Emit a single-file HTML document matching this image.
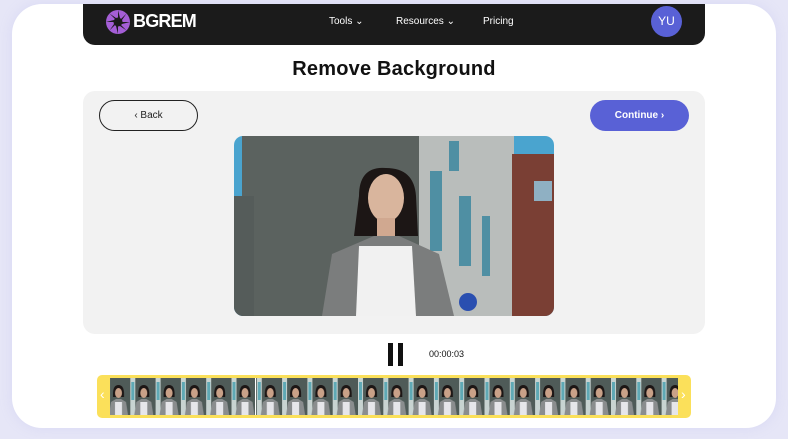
<!DOCTYPE html>
<html><head><meta charset="utf-8">
<style>
*{margin:0;padding:0;box-sizing:border-box}
body{width:788px;height:439px;overflow:hidden;background:#e6e6f7;font-family:"Liberation Sans",sans-serif;position:relative}
.card{position:absolute;left:12px;top:4px;width:764px;height:424px;background:#fff;border-radius:30px;box-shadow:0 0 14px #d8d8f3}
.nav{position:absolute;left:83px;top:4px;width:622px;height:41px;background:#1b1b1b;border-radius:0 0 12px 12px;color:#fff}
.nav .logo{position:absolute;left:22px;top:5px;width:26px;height:26px}
.nav .brand{position:absolute;left:50px;top:7px;font-weight:bold;font-size:18px;letter-spacing:-0.8px}
.nav .m{position:absolute;top:12px;font-size:10px}
.av{position:absolute;left:568px;top:2px;width:31px;height:31px;border-radius:50%;background:#5961d6;color:#fff;font-size:12px;text-align:center;line-height:31px}
h1{position:absolute;left:0;width:788px;top:58px;text-align:center;font-size:20px;font-weight:900;color:#111;letter-spacing:0.2px}
.panel{position:absolute;left:83px;top:91px;width:622px;height:243px;background:#f2f2f2;border-radius:12px}
.back{position:absolute;left:99px;top:100px;width:99px;height:31px;border:1px solid #222;border-radius:16px;font-size:10px;text-align:center;line-height:29px;color:#222}
.cont{position:absolute;left:590px;top:100px;width:99px;height:31px;background:#5961d6;border-radius:16px;font-size:10px;font-weight:bold;color:#fff;text-align:center;line-height:31px}
.photo{position:absolute;left:234px;top:136px;width:320px;height:180px;border-radius:9px;overflow:hidden}
.pause{position:absolute;top:343px;width:5px;height:23px;background:#111}
.time{position:absolute;left:429px;top:349px;font-size:9px;color:#111}
.strip{position:absolute;left:97px;top:375px;width:594px;height:43px;background:#fbe05a;border-radius:5px}
.frames{position:absolute;left:110px;top:378px;width:568px;height:37px;overflow:hidden}
</style></head><body>
<div class="card"></div>
<div class="nav">
<svg class="logo" viewBox="0 0 26 26"><g fill="#a45ed6"><circle cx="13" cy="13" r="12"/></g><g fill="#1b1b1b"><circle cx="13" cy="13" r="4.5"/><path d="M13 1 L15 9 L13 13Z M25 13 L17 15 L13 13Z M13 25 L11 17 L13 13Z M1 13 L9 11 L13 13Z M4.5 4.5 L11 9 L13 13Z M21.5 21.5 L15 17 L13 13Z M21.5 4.5 L17 11 L13 13Z M4.5 21.5 L9 15 L13 13Z"/></g></svg>
<div class="brand">BGREM</div>
<div class="m" style="left:246px">Tools ⌄</div>
<div class="m" style="left:313px">Resources ⌄</div>
<div class="m" style="left:400px">Pricing</div>
<div class="av">YU</div>
</div>
<h1>Remove Background</h1>
<div class="panel"></div>
<div class="back">‹ Back</div>
<div class="cont">Continue ›</div>
<div class="photo">
<svg width="320" height="180" viewBox="0 0 320 180">
<rect width="320" height="180" fill="#4aa4cf"/>
<rect x="8" y="0" width="182" height="180" fill="#5b625f"/>
<rect x="0" y="60" width="20" height="120" fill="#555c5a"/>
<rect x="185" y="0" width="95" height="180" fill="#b9bdbb"/>
<rect x="278" y="18" width="42" height="162" fill="#7a3f34"/>
<g fill="#4f8fa3"><rect x="196" y="35" width="12" height="80"/><rect x="225" y="60" width="12" height="70"/><rect x="248" y="80" width="8" height="60"/><rect x="215" y="5" width="10" height="30"/></g>
<rect x="300" y="45" width="18" height="20" fill="#8fb0c3"/>
<path d="M125 60 Q125 30 152 32 Q180 32 182 60 L184 100 L120 100 Z" fill="#1c1615"/>
<ellipse cx="152" cy="62" rx="18" ry="24" fill="#d9b59d"/>
<rect x="143" y="82" width="18" height="20" fill="#d0a890"/>
<path d="M88 180 L98 118 L140 100 L165 100 L205 118 L220 180Z" fill="#7b7d7d"/>
<path d="M125 110 L178 110 L182 180 L122 180Z" fill="#f1f1f1"/>
<circle cx="234" cy="166" r="9" fill="#2a4fb0"/>
</svg>
</div>
<div class="pause" style="left:388px"></div>
<div class="pause" style="left:398px"></div>
<div class="time">00:00:03</div>
<div class="strip"></div>
<svg class="frames" width="568" height="37">
<defs><pattern id="f" x="-5" y="0" width="25.3" height="37" patternUnits="userSpaceOnUse">
<rect width="25.3" height="37" fill="#4f5b58"/>
<rect x="0" y="0" width="5" height="37" fill="#c8d3d1"/>
<rect x="1" y="4" width="3" height="18" fill="#5fa9b5"/>
<path d="M4 37 L6 24 L11 21 L16 21 L21 24 L23 37Z" fill="#8a8d8e"/>
<path d="M10 24 L17 24 L17 37 L10 37Z" fill="#e6e6ea"/>
<path d="M8 16 Q8 7 13.5 7 Q19 7 19 16 L19 19 L8 19Z" fill="#1c1615"/>
<ellipse cx="13.5" cy="15" rx="3.5" ry="5" fill="#c9a188"/>
</pattern></defs>
<rect width="568" height="37" fill="url(#f)"/>
<rect x="145" y="0" width="1" height="37" fill="#fff"/>
</svg>
<div style="position:absolute;left:100px;top:386px;color:#fff;font-size:14px">‹</div>
<div style="position:absolute;left:681px;top:386px;color:#fff;font-size:14px">›</div>
</body></html>
